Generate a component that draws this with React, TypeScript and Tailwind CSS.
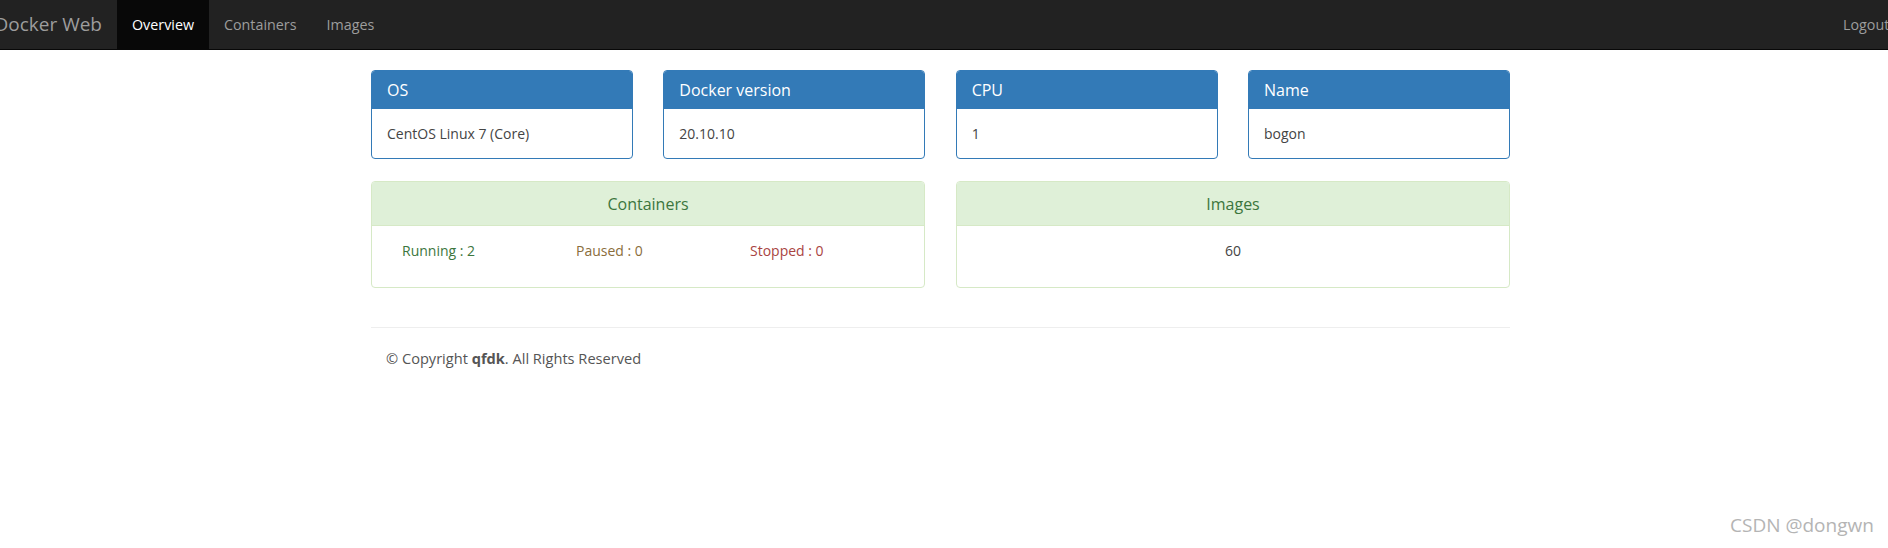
import React from 'react'

const font = { fontFamily: '"Open Sans", "Noto Sans", "Liberation Sans", sans-serif' }

function InfoPanel({ title, value }: { title: string; value: string }) {
  return (
    <div className="w-[262px] rounded-[4px] border border-[#337ab7] bg-white">
      <div className="h-[38px] rounded-t-[3px] bg-[#337ab7] px-[15px] text-[16px] leading-[38px] text-white">{title}</div>
      <div className="h-[49px] px-[15px] text-[14px] leading-[49px] text-[#444]">{value}</div>
    </div>
  )
}

function StatPanel({ title, children }: { title: string; children: React.ReactNode }) {
  return (
    <div className="w-[554px] rounded-[4px] border border-[#d6e9c6] bg-white">
      <div className="h-[44px] rounded-t-[3px] border-b border-[#d6e9c6] bg-[#dff0d8] text-center text-[16px] leading-[44px] text-[#3c763d]">
        {title}
      </div>
      <div className="h-[61px] px-[15px] pt-[15px] text-[14px] leading-[20px]">{children}</div>
    </div>
  )
}

export default function App() {
  const navItems = ['Overview', 'Containers', 'Images']

  return (
    <div className="relative h-[548px] w-[1888px] overflow-hidden bg-white" style={font}>
      {/* navbar */}
      <div className="flex h-[50px] items-stretch border-b border-[#080808] bg-[#222]">
        <div className="flex w-[117px] justify-end overflow-hidden whitespace-nowrap pr-[15px] text-[19px] leading-[49px] text-[#9d9d9d]">
          Docker Web
        </div>
        {navItems.map((item, i) => (
          <div
            key={item}
            className={
              i === 0
                ? 'bg-[#080808] px-[15px] text-[14.3px] leading-[49px] text-white'
                : 'px-[15px] text-[14.3px] leading-[49px] text-[#9d9d9d]'
            }
          >
            {item}
          </div>
        ))}
        <div className="ml-auto w-[45px] overflow-hidden whitespace-nowrap text-[14.3px] leading-[49px] text-[#9d9d9d]">
          Logout
        </div>
      </div>

      <div className="ml-[371px] mt-[20px] w-[1139px]">
        <div className="flex justify-between">
          <InfoPanel title="OS" value="CentOS Linux 7 (Core)" />
          <InfoPanel title="Docker version" value="20.10.10" />
          <InfoPanel title="CPU" value="1" />
          <InfoPanel title="Name" value="bogon" />
        </div>

        <div className="mt-[22px] flex justify-between">
          <StatPanel title="Containers">
            <div className="grid grid-cols-3">
              <span className="px-[15px] text-[#3c763d]">Running : 2</span>
              <span className="px-[15px] text-[#8a6d3b]">Paused : 0</span>
              <span className="px-[15px] text-[#a94442]">Stopped : 0</span>
            </div>
          </StatPanel>
          <StatPanel title="Images">
            <div className="text-center text-[#444]">60</div>
          </StatPanel>
        </div>

        <div className="mt-[39px] border-t border-[#eee]" />
        <div className="mt-[20px] px-[15px] text-[14.6px] leading-[20px] text-[#555]">
          © Copyright <b className="font-bold">qfdk</b>. All Rights Reserved
        </div>
      </div>

      <div className="absolute left-[1730px] top-[512px] text-[19px] leading-[26px] text-[#b4b4b4] [text-shadow:0_0_1px_#fff]">
        CSDN @dongwn
      </div>
    </div>
  )
}
